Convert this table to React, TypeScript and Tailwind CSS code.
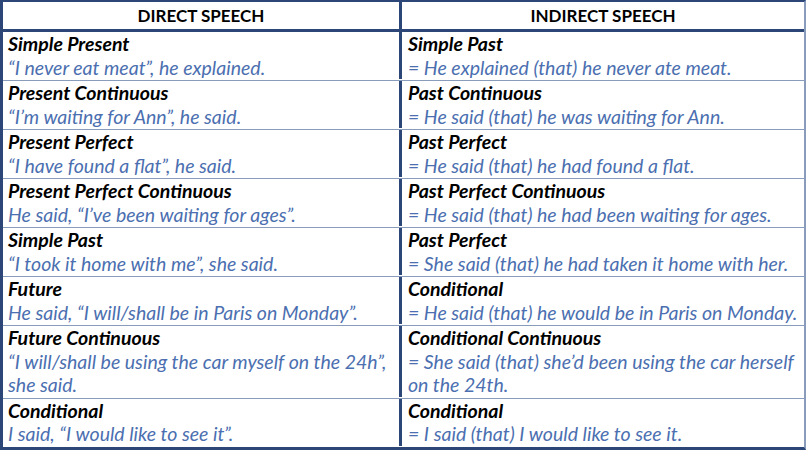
const rows: { d: [string, string]; i: [string, string] }[] = [
  { d: ["Simple Present", "“I never eat meat”, he explained."], i: ["Simple Past", "= He explained (that) he never ate meat."] },
  { d: ["Present Continuous", "“I’m waiting for Ann”, he said."], i: ["Past Continuous", "= He said (that) he was waiting for Ann."] },
  { d: ["Present Perfect", "“I have found a flat”, he said."], i: ["Past Perfect", "= He said (that) he had found a flat."] },
  { d: ["Present Perfect Continuous", "He said, “I’ve been waiting for ages”."], i: ["Past Perfect Continuous", "= He said (that) he had been waiting for ages."] },
  { d: ["Simple Past", "“I took it home with me”, she said."], i: ["Past Perfect", "= She said (that) he had taken it home with her."] },
  { d: ["Future", "He said, “I will/shall be in Paris on Monday”."], i: ["Conditional", "= He said (that) he would be in Paris on Monday."] },
  { d: ["Future Continuous", "“I will/shall be using the car myself on the 24h”, she said."], i: ["Conditional Continuous", "= She said (that) she’d been using the car herself on the 24th."] },
  { d: ["Conditional", "I said, “I would like to see it”."], i: ["Conditional", "= I said (that) I would like to see it."] },
];

function Cell({ title, text, left }: { title: string; text: string; left?: boolean }) {
  return (
    <div className={left ? "pl-[5px] pr-1 border-r-[3px] border-[#2b4677]" : "pl-[6px] pr-1"}>
      <div className="font-bold italic text-black">{title}</div>
      <div className="italic text-[#4b6fb0]">{text}</div>
    </div>
  );
}

export default function App() {
  return (
    <div className="w-[807px] h-[451px] bg-white">
      <div
        className="w-[806px] border-l-[3px] border-t-2 border-b-[3px] border-r-2 border-[#2b4677] border-r-[#8a9cbb] text-[19.5px] leading-[23.5px]"
        style={{ fontFamily: "Lato, 'Liberation Sans', sans-serif" }}
      >
        {/* Header */}
        <div className="grid grid-cols-[399px_1fr] h-[30px] border-b-[3px] border-[#2b4677]">
          <div className="border-r-[3px] border-[#2b4677] flex items-center justify-center font-bold text-[17px]">
            DIRECT SPEECH
          </div>
          <div className="flex items-center justify-center font-bold text-[17px]">INDIRECT SPEECH</div>
        </div>
        {rows.map((r, k) => (
          <div
            key={k}
            className={
              "grid grid-cols-[399px_1fr] pb-[1px] " + (k > 0 ? "border-t border-[#8a9cbb]" : "")
            }
          >
            <Cell title={r.d[0]} text={r.d[1]} left />
            <Cell title={r.i[0]} text={r.i[1]} />
          </div>
        ))}
      </div>
    </div>
  );
}
